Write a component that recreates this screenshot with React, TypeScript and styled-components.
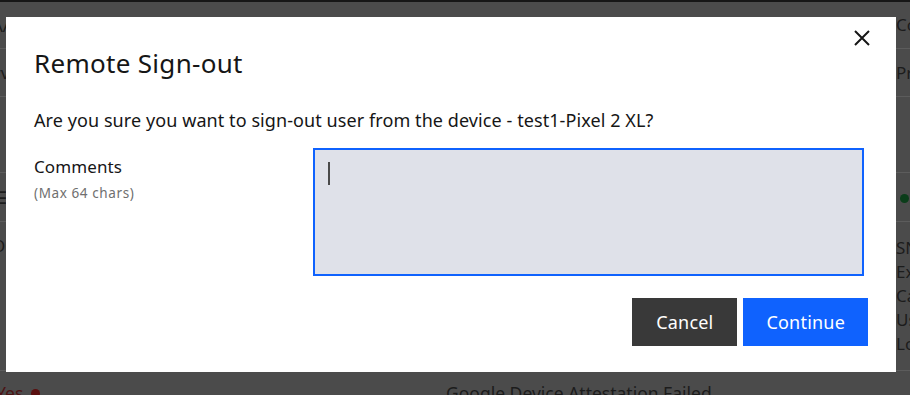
import React from "react";
import styled, { createGlobalStyle } from "styled-components";

const Global = createGlobalStyle`
  html, body { margin: 0; padding: 0; }
  body { font-family: "Noto Sans", "Open Sans", sans-serif; background: #4b4b4b; }
  * { box-sizing: border-box; }
`;

const Page = styled.div`
  position: relative;
  width: 910px;
  height: 395px;
  overflow: hidden;
  background: #4b4b4b;
`;

const TopStrip = styled.div`
  height: 2px;
  background: #161616;
`;

const Table = styled.div`
  display: flex;
  flex-direction: column;
`;

const Row = styled.div<{ $h: number }>`
  height: ${(p) => p.$h}px;
  border-bottom: 1px solid #5c5c5c;
  display: flex;
  justify-content: space-between;
  align-items: center;
  color: #1c1c1c;
  font-size: 17px;
`;

const LeftCell = styled.div<{ $top?: boolean }>`
  margin-left: -8px;
  width: 20px;
  overflow: hidden;
  align-self: ${(p) => (p.$top ? "flex-start" : "center")};
  margin-top: ${(p) => (p.$top ? "12px" : "0")};
`;

const RightCell = styled.div`
  width: 14px;
  overflow: hidden;
  line-height: 24px;
  white-space: nowrap;
`;

const Dot = styled.span<{ $c: string }>`
  display: inline-block;
  width: 9px;
  height: 9px;
  border-radius: 50%;
  background: ${(p) => p.$c};
  margin-left: 4px;
`;

const BottomRow = styled.div`
  display: flex;
  align-items: flex-start;
  padding-top: 10px;
  font-size: 17.5px;
  color: #1c1c1c;
`;

const YesCell = styled.div`
  width: 450px;
  margin-left: -4px;
  color: #4d1414;
  display: flex;
  align-items: center;
  gap: 4px;
`;

const Overlay = styled.div`
  position: absolute;
  inset: 0;
  padding: 17px 0 0 6px;
`;

const Modal = styled.div`
  position: relative;
  width: 890px;
  height: 355px;
  background: #ffffff;
  padding: 30px 28px 0 28px;
  display: flex;
  flex-direction: column;
  color: #161616;
`;

const Close = styled.button`
  position: absolute;
  top: 5px;
  right: 18px;
  width: 32px;
  height: 32px;
  border: none;
  background: transparent;
  padding: 0;
  display: flex;
  align-items: center;
  justify-content: center;
  cursor: pointer;
`;

const Title = styled.h2`
  margin: 0;
  font-size: 26px;
  font-weight: 400;
  line-height: 32px;
  letter-spacing: 0.3px;
`;

const Message = styled.p`
  margin: 28px 0 0 0;
  font-size: 18px;
  line-height: 26px;
  letter-spacing: 0.08px;
`;

const FieldRow = styled.div`
  display: flex;
  margin-top: 15px;
`;

const LabelCol = styled.div`
  width: 279px;
  display: flex;
  flex-direction: column;
  padding-top: 7px;
`;

const Label = styled.div`
  font-size: 17px;
  line-height: 24px;
  letter-spacing: 0.1px;
`;

const Hint = styled.div`
  font-size: 13.5px;
  line-height: 18px;
  letter-spacing: 0.6px;
  color: #6f6f6f;
  margin-top: 5px;
`;

const TextArea = styled.div`
  position: relative;
  width: 551px;
  height: 128px;
  background: #dfe1e9;
  border: 2px solid #0f62fe;
`;

const Caret = styled.span`
  position: absolute;
  left: 13px;
  top: 12px;
  width: 2px;
  height: 23px;
  background: #4a4a4a;
`;

const Actions = styled.div`
  display: flex;
  justify-content: flex-end;
  gap: 6px;
  margin-top: 22px;
`;

const Button = styled.button<{ $primary?: boolean }>`
  height: 48px;
  padding: 0 ${(p) => (p.$primary ? "23px" : "24px")};
  border: none;
  background: ${(p) => (p.$primary ? "#0f62fe" : "#393939")};
  color: #ffffff;
  font-family: inherit;
  font-size: 18px;
  letter-spacing: 0.2px;
  cursor: pointer;
`;

export default function App() {
  return (
    <>
      <Global />
      <Page>
        <TopStrip />
        <Table>
          <Row $h={47}>
            <LeftCell>AA</LeftCell>
            <RightCell>Co</RightCell>
          </Row>
          <Row $h={48}>
            <LeftCell>vv</LeftCell>
            <RightCell>Pr</RightCell>
          </Row>
          <Row $h={76}>
            <LeftCell />
            <RightCell />
          </Row>
          <Row $h={49}>
            <LeftCell>☰</LeftCell>
            <RightCell>
              <Dot $c="#0b3d1a" />
            </RightCell>
          </Row>
          <Row $h={149}>
            <LeftCell $top>OO</LeftCell>
            <RightCell>
              SN
              <br />
              Ex
              <br />
              Ca
              <br />
              Us
              <br />
              Lo
            </RightCell>
          </Row>
          <BottomRow>
            <YesCell>
              Yes <Dot $c="#5a0f0f" />
            </YesCell>
            <div>Google Device Attestation Failed</div>
          </BottomRow>
        </Table>
        <Overlay>
          <Modal>
            <Close aria-label="Close">
              <svg width="20" height="20" viewBox="0 0 20 20">
                <path d="M3 3 L17 17 M17 3 L3 17" stroke="#161616" strokeWidth="2" />
              </svg>
            </Close>
            <Title>Remote Sign-out</Title>
            <Message>Are you sure you want to sign-out user from the device - test1-Pixel 2 XL?</Message>
            <FieldRow>
              <LabelCol>
                <Label>Comments</Label>
                <Hint>(Max 64 chars)</Hint>
              </LabelCol>
              <TextArea>
                <Caret />
              </TextArea>
            </FieldRow>
            <Actions>
              <Button>Cancel</Button>
              <Button $primary>Continue</Button>
            </Actions>
          </Modal>
        </Overlay>
      </Page>
    </>
  );
}
